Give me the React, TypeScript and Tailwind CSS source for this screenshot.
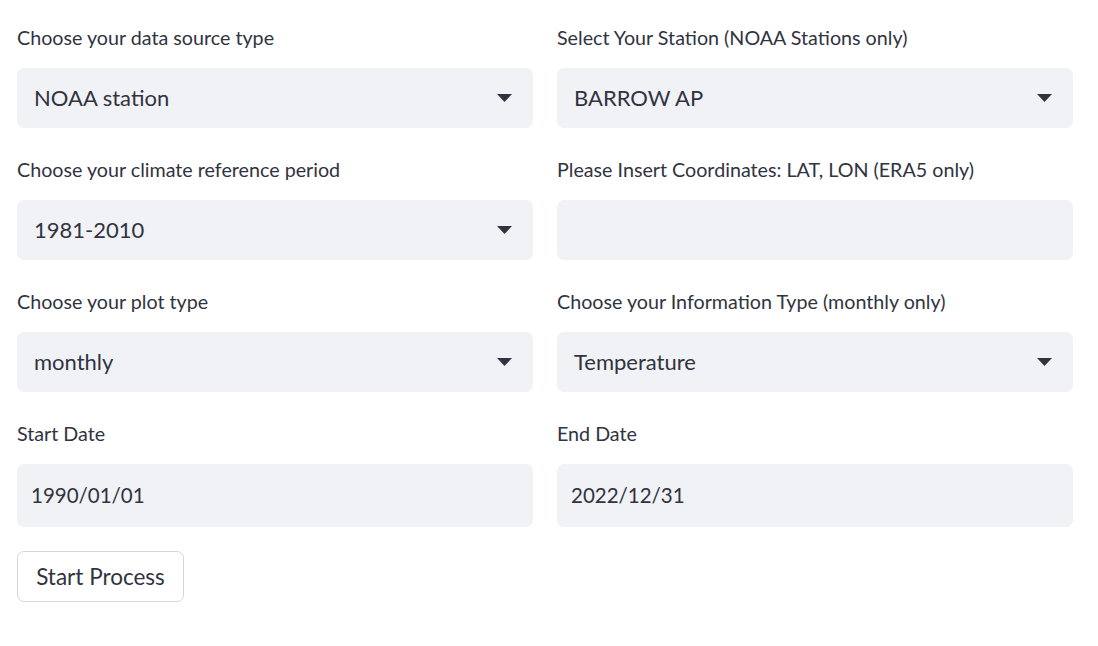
import React from 'react';

const font = { fontFamily: 'Lato, "Noto Sans", sans-serif' };

const Caret = () => (
	<svg width="15" height="8" viewBox="0 0 15 8" className="shrink-0">
		<path d="M0 0 L15 0 L7.5 8 Z" fill="#31333f" />
	</svg>
);

type FieldProps = { label: string; children: React.ReactNode };

const Field = ({ label, children }: FieldProps) => (
	<div className="flex flex-col">
		<div className="h-[30px] leading-[30px] text-[19.7px] text-[#31333f] whitespace-nowrap">{label}</div>
		<div className="mt-[15px]">{children}</div>
	</div>
);

const Select = ({ value }: { value: string }) => (
	<div className="flex h-[60px] items-center justify-between rounded-[7px] bg-[#f0f2f6] pl-[17px] pr-[21px]">
		<span className="-mt-px text-[22px] text-[#31333f]">{value}</span>
		<Caret />
	</div>
);

const TextBox = ({ value = '', tall = false }: { value?: string; tall?: boolean }) => (
	<div
		className={`flex items-center rounded-[7px] bg-[#f0f2f6] pl-[14px] ${tall ? 'h-[63px]' : 'h-[60px]'}`}
	>
		<span className="text-[20.5px] text-[#31333f]">{value}</span>
	</div>
);

export default function App() {
	return (
		<div className="min-h-[646px] w-[1098px] bg-white pl-[17px] pt-[23px]" style={font}>
			<div className="grid w-[1056px] grid-cols-2 gap-x-6">
				<div className="flex flex-col gap-[27px]">
					<Field label="Choose your data source type">
						<Select value="NOAA station" />
					</Field>
					<Field label="Choose your climate reference period">
						<Select value="1981-2010" />
					</Field>
					<Field label="Choose your plot type">
						<Select value="monthly" />
					</Field>
					<Field label="Start Date">
						<TextBox value="1990/01/01" tall />
					</Field>
				</div>
				<div className="flex flex-col gap-[27px]">
					<Field label="Select Your Station (NOAA Stations only)">
						<Select value="BARROW AP" />
					</Field>
					<Field label="Please Insert Coordinates: LAT, LON (ERA5 only)">
						<TextBox />
					</Field>
					<Field label="Choose your Information Type (monthly only)">
						<Select value="Temperature" />
					</Field>
					<Field label="End Date">
						<TextBox value="2022/12/31" tall />
					</Field>
				</div>
			</div>
			<button className="mt-[24px] h-[51px] w-[167px] rounded-[7px] border border-[#d5d6d9] bg-white text-[22.5px] text-[#31333f]">
				Start Process
			</button>
		</div>
	);
}
